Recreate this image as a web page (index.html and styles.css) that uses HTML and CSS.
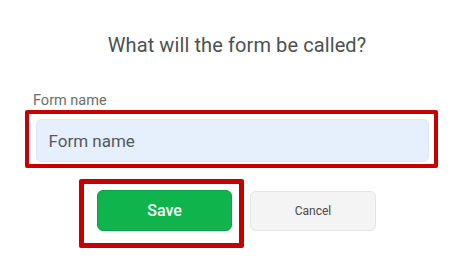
FILE: index.html
```html
<!DOCTYPE html>
<html lang="en">

<head>
  <meta charset="UTF-8">
  <meta name="viewport" content="width=device-width, initial-scale=1.0">
  <title>Name your form</title>

  <link rel="stylesheet" href="styles.css">
</head>

<body>
  <div class="dialog">
    <h2 class="title">What will the form be called?</h2>
    <div class="field">
      <label class="label" for="formName">Form name</label>
      <div class="highlight fieldHighlight">
        <input id="formName" class="nameInput" type="text" placeholder="Form name">
      </div>
    </div>
    <div class="actions">
      <div class="highlight saveHighlight">
        <button class="btn btnSave">Save</button>
      </div>
      <button class="btn btnCancel">Cancel</button>
    </div>
  </div>
</body>

</html>
```

FILE: styles.css
```css
* {
  padding: 0;
  margin: 0;
  box-sizing: border-box;
}

html,
body {
  height: 100%;
}

body {
  background: #fff;
  font-family: Roboto, 'Noto Sans', sans-serif;
}

.dialog {
  padding-top: 33px;
}

.title {
  font-size: 20px;
  font-weight: 400;
  line-height: 24px;
  color: #4b5151;
  text-align: center;
  letter-spacing: 0.1px;
}

.field {
  margin-top: 36px;
  margin-left: 25px;
  width: 413px;
}

.label {
  display: block;
  padding-left: 8px;
  font-size: 14.5px;
  line-height: 16px;
  color: #6a6d6d;
}

.highlight {
  border: 4.5px solid #c40000;
  border-radius: 2px;
}

.fieldHighlight {
  margin-top: 1px;
  padding: 5px 5.5px 1.5px 6.5px;
}

.nameInput {
  display: block;
  width: 100%;
  height: 43px;
  padding: 0 12px;
  border: 1px solid #dfe8f3;
  border-radius: 5px;
  background: #e6effc;
  font-family: inherit;
  font-size: 17px;
  color: #525a62;
  outline: none;
}

.nameInput::placeholder {
  color: #525a62;
}

.actions {
  display: flex;
  align-items: flex-start;
  gap: 6px;
  margin-top: 11px;
  margin-left: 79px;
}

.saveHighlight {
  border-width: 5px;
  padding: 6px 7px 12px 13px;
}

.btn {
  display: block;
  border-radius: 6px;
  font-family: inherit;
  cursor: pointer;
}

.btnSave {
  width: 135px;
  height: 41px;
  border: 1px solid #0ca144;
  background: #10b44d;
  color: #fff;
  font-size: 16px;
  font-weight: 500;
}

.btnCancel {
  width: 126px;
  height: 40px;
  margin-top: 12px;
  border: 1px solid #e4e4e4;
  background: #f4f4f4;
  color: #4a4a4a;
  font-size: 12px;
}
```
